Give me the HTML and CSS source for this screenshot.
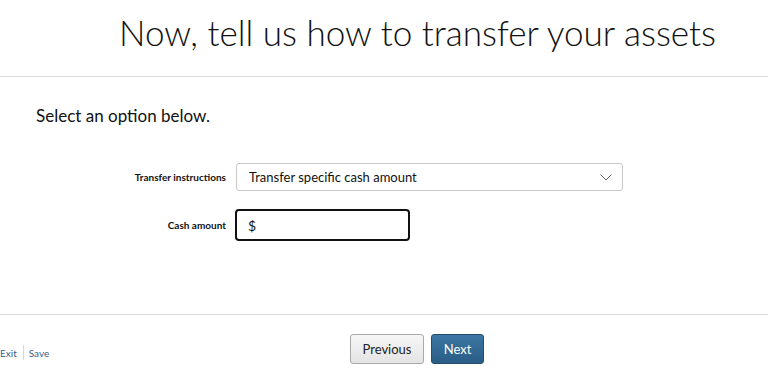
FILE: index.html
```html
<!DOCTYPE html>
<html>
<head>
<meta charset="utf-8">
<link rel="stylesheet" href="styles.css">
</head>
<body>
<header class="header">
  <h1 class="title">Now, tell us how to transfer your assets</h1>
</header>
<main class="main">
  <p class="intro">Select an option below.</p>
  <div class="form">
    <label class="label">Transfer instructions</label>
    <div class="select">
      <span class="select-text">Transfer specific cash amount</span>
      <svg class="chev" width="12" height="7" viewBox="0 0 12 7"><path d="M0.5 0.5 L6 6 L11.5 0.5" fill="none" stroke="#666" stroke-width="1"/></svg>
    </div>
    <label class="label">Cash amount</label>
    <div class="input"><span>$</span></div>
  </div>
</main>
<footer class="footer">
  <div class="links">
    <a class="link">Exit</a>
    <span class="sep"></span>
    <a class="link">Save</a>
  </div>
  <div class="buttons">
    <button class="btn btn-prev">Previous</button>
    <button class="btn btn-next">Next</button>
  </div>
</footer>
</body>
</html>
```
FILE: styles.css
```css
html, body {
  margin: 0;
  padding: 0;
  background: #fff;
}
body {
  width: 768px;
  height: 389px;
  overflow: hidden;
  font-family: Lato, "Liberation Sans", sans-serif;
  color: #111;
}
.header {
  height: 77px;
  border-bottom: 1px solid #dcdcdc;
  box-sizing: border-box;
  padding-left: 119px;
}
.title {
  margin: 0;
  padding-top: 10px;
  font-weight: 300;
  font-size: 35.1px;
  line-height: 44px;
  color: #111;
}
.main {
  height: 238px;
  border-bottom: 1px solid #dcdcdc;
  box-sizing: border-box;
}
.intro {
  margin: 0;
  padding: 27px 0 0 36px;
  font-size: 17px;
  line-height: 24px;
  color: #111;
}
.form {
  display: grid;
  grid-template-columns: 226px auto;
  column-gap: 10px;
  row-gap: 18px;
  margin-top: 35px;
  align-items: center;
}
.label {
  text-align: right;
  font-size: 10px;
  font-weight: 700;
  color: #111;
}
.select {
  width: 387px;
  height: 28px;
  box-sizing: border-box;
  border: 1px solid #c8c8c8;
  border-radius: 3px;
  display: flex;
  align-items: center;
  justify-content: space-between;
  padding: 0 10px 0 12px;
  font-size: 13px;
}
.select-text {
  color: #111;
}
.input {
  width: 175px;
  height: 32px;
  box-sizing: border-box;
  border: 2px solid #111;
  border-radius: 4px;
  margin-left: -1px;
  display: flex;
  align-items: center;
  padding-left: 11px;
  font-size: 14px;
}
.footer {
  display: flex;
  height: 74px;
  padding-top: 19px;
  box-sizing: border-box;
  align-items: flex-start;
}
.links {
  display: flex;
  align-items: center;
  width: 350px;
  margin-top: 11px;
}
.link {
  font-size: 10px;
  color: #3b5f86;
}
.sep {
  width: 1px;
  height: 15px;
  background: #d8d8d8;
  margin: 0 5px 0 6px;
}
.buttons {
  display: flex;
  gap: 7px;
}
.btn {
  height: 30px;
  box-sizing: border-box;
  font-family: Lato, "Liberation Sans", sans-serif;
  font-size: 13px;
  border-radius: 3px;
  padding: 0;
  cursor: pointer;
}
.btn-prev {
  width: 74px;
  border: 1px solid #a9a9a9;
  background: linear-gradient(#f6f6f6, #e4e4e4);
  color: #222;
}
.btn-next {
  width: 53px;
  border: 1px solid #244d6e;
  background: linear-gradient(#3c76a3, #2a5d86);
  color: #fff;
}
```
